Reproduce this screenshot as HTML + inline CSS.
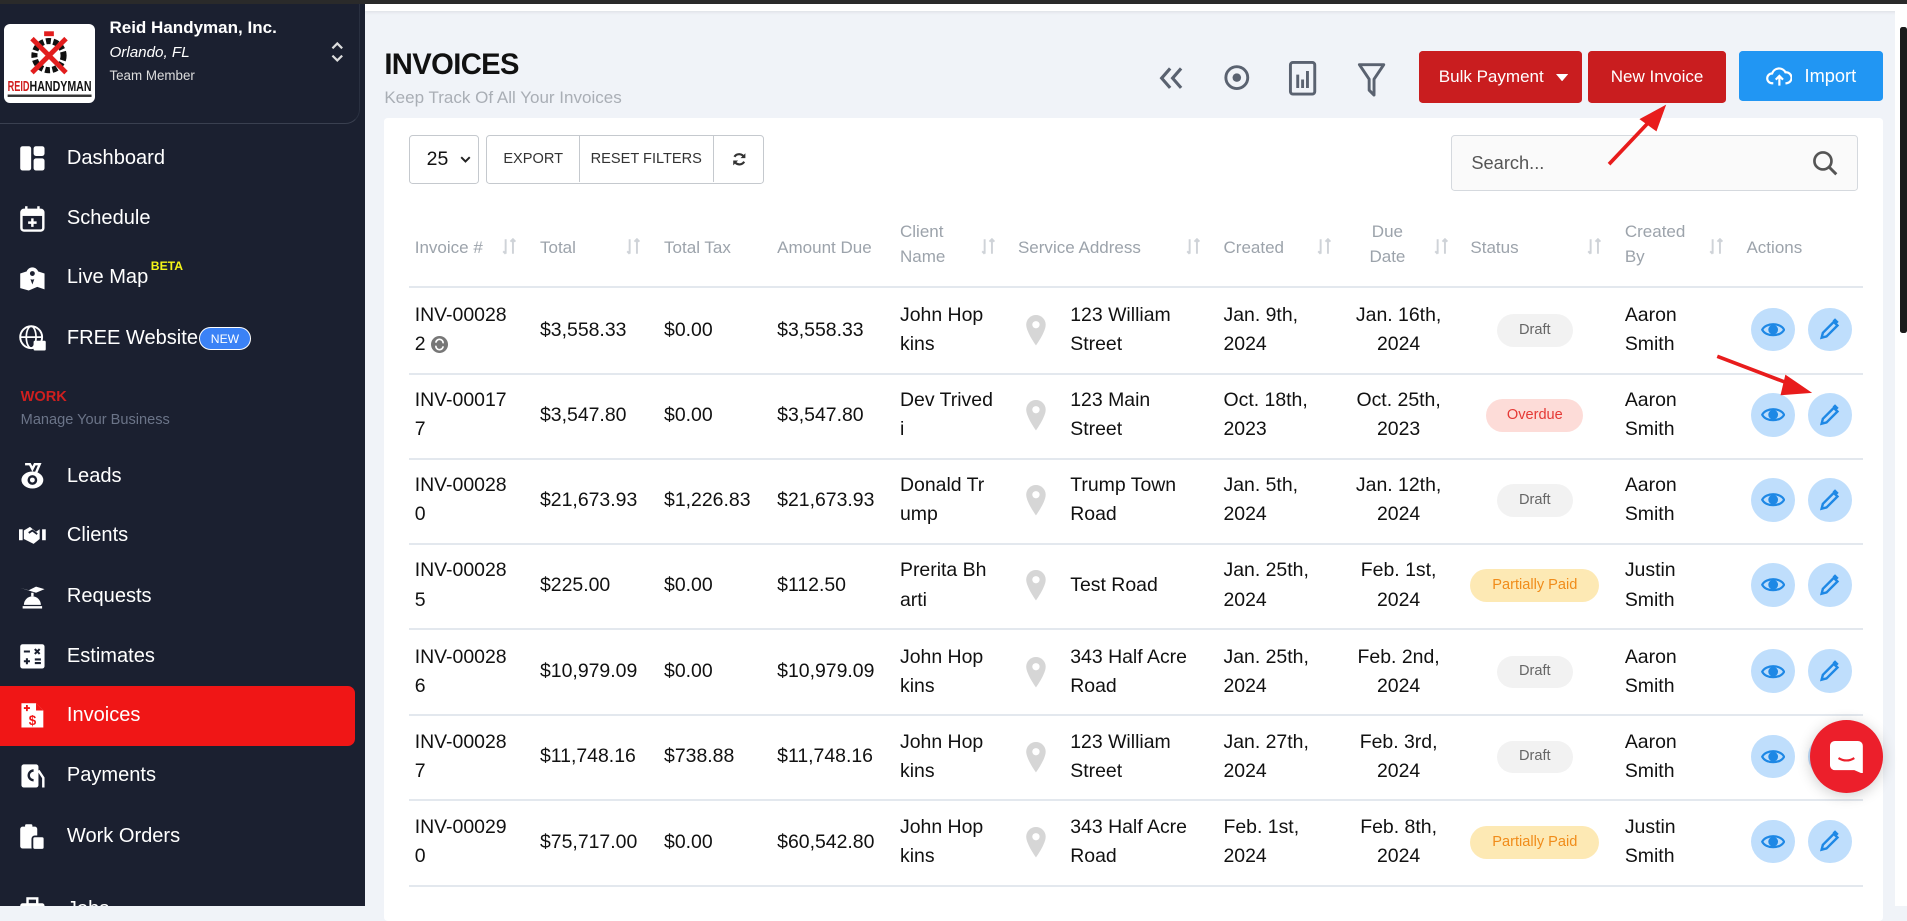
<!DOCTYPE html>
<html><head><meta charset="utf-8">
<style>
html{zoom:1.2162}
*{box-sizing:border-box;margin:0;padding:0}
body{width:1568px;height:745px;overflow:hidden;position:relative;font-family:"Liberation Sans",Arial,sans-serif;background:#f0f3f8;color:#111}
.abs{position:absolute}
#topbar{left:0;top:0;width:1568px;height:3px;background:#2a2a2a}
#side{left:0;top:3px;width:300px;height:742px;background:#1b2030;color:#fff;overflow:hidden}
.nav{position:absolute;left:0;width:292px;height:49px;display:flex;align-items:center;font-size:16.5px;color:#fff}
.nav svg{position:absolute;left:16px;width:22px;height:22px}
.nav span.t{position:absolute;left:55px}
.nav.act{background:#f01616;border-radius:0 6px 6px 0}
.hdr{position:absolute;top:180px;font-size:14px;color:#9ca3ab;line-height:21px}
.sort{position:absolute;top:196px;width:12px;height:14px}
.row{position:absolute;left:336px;width:1196px;height:71px;border-bottom:2px solid #e3e8ee}
.c{position:absolute;top:0;height:69px;display:flex;align-items:center;font-size:16px;line-height:24px;color:#111;white-space:nowrap}
.badge{font-size:12px;border-radius:14px;height:27px;display:flex;align-items:center;justify-content:center}
.circ{position:absolute;width:36px;height:36px;border-radius:50%;background:#bfdefc;display:flex;align-items:center;justify-content:center}
</style></head><body>
<div id="topbar" class="abs"></div>
<div id="side" class="abs">
  <div class="abs" style="left:0;top:0;width:296px;height:99px;border-bottom:1px solid #3a4050;border-right:1px solid #2a3040;border-radius:0 0 12px 0"></div>
  <div class="abs" style="left:3px;top:17px;width:75px;height:65px;background:#fff;border-radius:5px;overflow:hidden">
    <svg width="75" height="65" viewBox="0 0 75 65">
      <circle cx="37" cy="26" r="12" fill="none" stroke="#111" stroke-width="5" stroke-dasharray="4 2"/>
      <line x1="23" y1="12" x2="51" y2="40" stroke="#e21d1d" stroke-width="4"/>
      <line x1="51" y1="12" x2="23" y2="40" stroke="#e21d1d" stroke-width="4"/>
      <rect x="33" y="6" width="8" height="4" fill="#e21d1d"/>
      <text x="3" y="55" font-family="Liberation Sans" font-weight="bold" font-size="12" fill="#d01d1d" textLength="18" lengthAdjust="spacingAndGlyphs">REID</text>
      <text x="21" y="55" font-family="Liberation Sans" font-weight="bold" font-size="12" fill="#111" textLength="51" lengthAdjust="spacingAndGlyphs">HANDYMAN</text>
      <rect x="3" y="58" width="69" height="2" fill="#333"/>
    </svg>
  </div>
  <div class="abs" style="left:90px;top:12px;font-size:14px;font-weight:bold">Reid Handyman, Inc.</div>
  <div class="abs" style="left:90px;top:33px;font-size:12.5px;font-style:italic">Orlando, FL</div>
  <div class="abs" style="left:90px;top:53px;font-size:11px;color:#ddd">Team Member</div>
  <svg class="abs" style="left:271px;top:31px" width="12" height="18" viewBox="0 0 12 18"><path d="M2 6 L6 2 L10 6 M2 12 L6 16 L10 12" fill="none" stroke="#ddd" stroke-width="1.8"/></svg>

  <div class="nav" style="top:103px"><svg viewBox="0 0 22 22"><rect x="1" y="1" width="9" height="20" rx="2" fill="#fff"/><rect x="12" y="1" width="9" height="8" rx="2" fill="#fff"/><rect x="12" y="11" width="9" height="10" rx="2" fill="#fff"/></svg><span class="t">Dashboard</span></div>
  <div class="nav" style="top:152px"><svg viewBox="0 0 22 22"><rect x="2" y="4" width="18" height="17" rx="2" fill="none" stroke="#fff" stroke-width="2"/><rect x="2" y="4" width="18" height="5" fill="#fff"/><line x1="6" y1="1" x2="6" y2="5" stroke="#fff" stroke-width="2"/><line x1="16" y1="1" x2="16" y2="5" stroke="#fff" stroke-width="2"/><path d="M11 11v7M7.5 14.5h7" stroke="#fff" stroke-width="2"/></svg><span class="t">Schedule</span></div>
  <div class="nav" style="top:201px"><svg viewBox="0 0 22 22"><path d="M1 7 L7 5 L11 16 L15 5 L21 7 L21 20 L15 18 L8 21 L1 19Z" fill="#fff"/><circle cx="11" cy="7" r="5" fill="#fff"/><circle cx="11" cy="7" r="2" fill="#1b2030"/></svg><span class="t">Live Map</span><span style="position:absolute;left:124px;top:9px;font-size:10px;font-weight:bold;color:#f5f518">BETA</span></div>
  <div class="nav" style="top:251px"><svg viewBox="0 0 22 22"><circle cx="10" cy="10" r="9" fill="none" stroke="#fff" stroke-width="1.6"/><ellipse cx="10" cy="10" rx="4" ry="9" fill="none" stroke="#fff" stroke-width="1.4"/><line x1="1" y1="10" x2="19" y2="10" stroke="#fff" stroke-width="1.4"/><rect x="12" y="13" width="10" height="8" rx="1" fill="#fff"/></svg><span class="t">FREE Website</span><span style="position:absolute;left:164px;top:15px;height:19px;width:42px;border:1px solid #fff;background:#3b82f6;border-radius:10px;font-size:10px;display:flex;align-items:center;justify-content:center">NEW</span></div>

  <div class="abs" style="left:17px;top:317px;font-size:12px;font-weight:bold;color:#d01f1f">WORK</div>
  <div class="abs" style="left:17px;top:336px;font-size:12px;color:#6b7488">Manage Your Business</div>

  <div class="nav" style="top:364px"><svg viewBox="0 0 22 22"><path d="M5 1h4l2 4 2-4h4l-3 7" fill="none" stroke="#fff" stroke-width="2"/><ellipse cx="11" cy="14" rx="9" ry="7" fill="#fff"/><circle cx="11" cy="14" r="4" fill="#1b2030"/><circle cx="11" cy="14" r="2" fill="#fff"/></svg><span class="t">Leads</span></div>
  <div class="nav" style="top:413px"><svg viewBox="0 0 22 22"><rect x="0" y="6" width="3" height="9" fill="#fff"/><rect x="19" y="6" width="3" height="9" fill="#fff"/><path d="M4 7 L9 4 L14 8 L17 6 L17 14 L12 18 L4 14Z" fill="#fff"/><path d="M8 9l3-2 4 3" stroke="#1b2030" stroke-width="1.5" fill="none"/></svg><span class="t">Clients</span></div>
  <div class="nav" style="top:463px"><svg viewBox="0 0 22 22"><path d="M1 4 L8 6 L14 3 L21 5 L14 8Z" fill="#fff"/><rect x="10" y="8" width="2" height="3" fill="#fff"/><path d="M4 18 A7 7 0 0 1 18 18Z" fill="#fff"/><rect x="3" y="19" width="16" height="2" fill="#fff"/></svg><span class="t">Requests</span></div>
  <div class="nav" style="top:512px"><svg viewBox="0 0 22 22"><rect x="1" y="1" width="20" height="20" rx="2" fill="#fff"/><path d="M4 7h5M13 5l4 4M17 5l-4 4M4 15h5M6.5 12.5v5M13 13.5h5M13 16.5h5" stroke="#1b2030" stroke-width="1.7"/></svg><span class="t">Estimates</span></div>
  <div class="nav act" style="top:561px"><svg viewBox="0 0 22 22"><path d="M2 1h12l6 6v14H2Z" fill="#fff"/><path d="M14 1v6h6" fill="#f01616"/><path d="M4 5h5M6.5 2.5v5" stroke="#f01616" stroke-width="1.5"/><text x="8" y="19" font-size="11" font-weight="bold" fill="#f01616" font-family="Liberation Sans">$</text></svg><span class="t">Invoices</span></div>
  <div class="nav" style="top:610px"><svg viewBox="0 0 22 22"><rect x="2" y="2" width="14" height="19" rx="2" fill="#fff"/><path d="M16 7l4 6v8" stroke="#fff" stroke-width="2" fill="none"/><path d="M12 7a4 4 0 1 0 0 8" stroke="#1b2030" stroke-width="2" fill="none"/></svg><span class="t">Payments</span></div>
  <div class="nav" style="top:660px"><svg viewBox="0 0 22 22"><rect x="1" y="3" width="14" height="18" rx="2" fill="#fff"/><rect x="5" y="1" width="6" height="4" rx="1" fill="#fff"/><rect x="11" y="11" width="10" height="11" rx="2" fill="#fff" stroke="#1b2030" stroke-width="1.5"/></svg><span class="t">Work Orders</span></div>
  <div class="nav" style="top:720px"><svg viewBox="0 0 22 22"><rect x="1" y="6" width="20" height="15" rx="2" fill="#fff"/><rect x="7" y="2" width="8" height="5" fill="none" stroke="#fff" stroke-width="2"/></svg><span class="t">Jobs</span></div>
</div>

<div class="abs" style="left:300px;top:3px;width:1268px;height:6px;background:#fff;box-shadow:0 1px 3px rgba(0,0,0,.08)"></div>
<div class="abs" style="left:1558px;top:9px;width:10px;height:736px;background:#fff"></div>
<div class="abs" style="left:1562px;top:22px;width:6px;height:252px;background:#1b1b1b;border-radius:2px"></div>

<div class="abs" style="left:316px;top:40px;font-size:24px;font-weight:bold;letter-spacing:-0.5px">INVOICES</div>
<div class="abs" style="left:316px;top:72px;font-size:14px;color:#a9aeb5">Keep Track Of All Your Invoices</div>

<svg class="abs" style="left:952px;top:54px" width="22" height="20" viewBox="0 0 22 20"><path d="M10 2 L3 10 L10 18 M19 2 L12 10 L19 18" fill="none" stroke="#5a6270" stroke-width="2.6"/></svg>
<svg class="abs" style="left:1004px;top:52px" width="26" height="24" viewBox="0 0 26 24"><circle cx="13" cy="12" r="9" fill="none" stroke="#5a6270" stroke-width="2.4"/><circle cx="13" cy="12" r="3.5" fill="#5a6270"/></svg>
<svg class="abs" style="left:1059px;top:49px" width="24" height="30" viewBox="0 0 24 30"><rect x="2" y="2" width="20" height="26" rx="2" fill="none" stroke="#5a6270" stroke-width="2.4"/><path d="M8 12v11M12 16v7M16 9v14" stroke="#5a6270" stroke-width="2.4"/></svg>
<svg class="abs" style="left:1116px;top:50px" width="24" height="30" viewBox="0 0 24 30"><path d="M2 3 H22 L14 15 V28 L10 24 V15 Z" fill="none" stroke="#5a6270" stroke-width="2.4" stroke-linejoin="round"/></svg>

<div class="abs" style="left:1167px;top:42px;width:134px;height:43px;background:#c91d1f;border-radius:3px;color:#fff;font-size:14px;display:flex;align-items:center;padding-left:16px">Bulk Payment<svg style="margin-left:10px" width="10" height="6"><path d="M0 0h10L5 6Z" fill="#fff"/></svg></div>
<div class="abs" style="left:1306px;top:42px;width:113px;height:43px;background:#c91d1f;border-radius:3px;color:#fff;font-size:14px;display:flex;align-items:center;justify-content:center">New Invoice</div>
<div class="abs" style="left:1430px;top:42px;width:118px;height:41px;background:#2196f3;border-radius:3px;color:#fff;font-size:15px;display:flex;align-items:center;justify-content:center"><svg width="22" height="18" viewBox="0 0 22 18" style="margin-right:10px"><path d="M6 15H5a4 4 0 0 1 0-8 6 6 0 0 1 11-1 4.5 4.5 0 0 1 1 9h-1" fill="none" stroke="#fff" stroke-width="1.8"/><path d="M11 17V9M8 12l3-3 3 3" fill="none" stroke="#fff" stroke-width="1.8"/></svg>Import</div>

<div class="abs" style="left:316px;top:97px;width:1232px;height:660px;background:#fff;border-radius:3px"></div>

<div class="abs" style="left:336px;top:111px;width:58px;height:40px;border:1px solid #c5c9ce;border-radius:3px;font-size:16px;display:flex;align-items:center;padding-left:14px;background:#fff">25<svg style="margin-left:10px" width="9" height="6"><path d="M1 1l3.5 3.5L8 1" stroke="#222" stroke-width="1.6" fill="none"/></svg></div>
<div class="abs" style="left:400px;top:111px;width:228px;height:40px;border:1px solid #c5c9ce;border-radius:3px;background:#fff;font-size:12px;color:#333">
  <div class="abs" style="left:0;top:0;width:76px;height:38px;border-right:1px solid #c5c9ce;display:flex;align-items:center;justify-content:center">EXPORT</div>
  <div class="abs" style="left:76px;top:0;width:110px;height:38px;border-right:1px solid #c5c9ce;display:flex;align-items:center;justify-content:center">RESET FILTERS</div>
  <svg class="abs" style="left:201px;top:13px" width="12" height="12" viewBox="0 0 12 12"><path d="M10 4.5A4.5 4.5 0 0 0 2 4M2 7.5A4.5 4.5 0 0 0 10 8" fill="none" stroke="#333" stroke-width="1.8"/><path d="M11 1v4H7M1 11V7h4" fill="#333"/></svg>
</div>
<div class="abs" style="left:1193px;top:111px;width:335px;height:46px;border:1px solid #d5d9de;border-radius:3px;background:#fafafa;font-size:15px;color:#555;display:flex;align-items:center;padding-left:16px">Search...</div>
<svg class="abs" style="left:1490px;top:123px" width="22" height="22" viewBox="0 0 22 22"><circle cx="9" cy="9" r="7" fill="none" stroke="#555" stroke-width="2.2"/><line x1="14" y1="14" x2="20" y2="20" stroke="#555" stroke-width="2.4"/></svg>

<div class="hdr" style="left:341px;top:193px">Invoice #</div>
<div class="hdr" style="left:444px;top:193px">Total</div>
<div class="hdr" style="left:546px;top:193px">Total Tax</div>
<div class="hdr" style="left:639px;top:193px">Amount Due</div>
<div class="hdr" style="left:740px">Client<br>Name</div>
<div class="hdr" style="left:837px;top:193px">Service Address</div>
<div class="hdr" style="left:1006px;top:193px">Created</div>
<div class="hdr" style="left:1126px;text-align:center">Due<br>Date</div>
<div class="hdr" style="left:1209px;top:193px">Status</div>
<div class="hdr" style="left:1336px">Created<br>By</div>
<div class="hdr" style="left:1436px;top:193px">Actions</div>
<svg width="0" height="0" style="position:absolute"><defs><g id="srt"><path d="M3 1v12M1 11l2 2M9 13V1M7 3l2-2 2 2" stroke="#cfd3d8" stroke-width="1.6" fill="none"/></g></defs></svg>
<svg class="sort" style="left:413px" viewBox="0 0 12 14"><use href="#srt"/></svg>
<svg class="sort" style="left:515px" viewBox="0 0 12 14"><use href="#srt"/></svg>
<svg class="sort" style="left:807px" viewBox="0 0 12 14"><use href="#srt"/></svg>
<svg class="sort" style="left:975px" viewBox="0 0 12 14"><use href="#srt"/></svg>
<svg class="sort" style="left:1083px" viewBox="0 0 12 14"><use href="#srt"/></svg>
<svg class="sort" style="left:1179px" viewBox="0 0 12 14"><use href="#srt"/></svg>
<svg class="sort" style="left:1305px" viewBox="0 0 12 14"><use href="#srt"/></svg>
<svg class="sort" style="left:1405px" viewBox="0 0 12 14"><use href="#srt"/></svg>
<div class="abs" style="left:336px;top:235px;width:1196px;height:2px;background:#e3e8ee"></div>

<svg width="0" height="0" style="position:absolute"><defs>
<g id="pin"><path d="M9 0a8 8 0 0 1 8 8c0 6-8 17-8 17S1 14 1 8a8 8 0 0 1 8-8z" fill="#d6d6d6"/><circle cx="9" cy="8" r="3" fill="#fff"/></g>
<g id="eye"><path d="M1 8C4 2 16 2 19 8 16 14 4 14 1 8Z" fill="none" stroke="#1e88e5" stroke-width="1.8"/><circle cx="10" cy="8" r="4" fill="#1e88e5"/></g>
<g id="pen"><path d="M3 17l1-4 9-9 3 3-9 9z" fill="none" stroke="#1e88e5" stroke-width="2"/><path d="M12 3l2-2 3 3-2 2z" fill="#1e88e5"/></g>
</defs></svg>

<div class="row" style="top:237px">
 <div class="c" style="left:5px"><span>INV-00028<br>2 <svg width="14" height="14" viewBox="0 0 14 14" style="vertical-align:-2px"><circle cx="7" cy="7" r="7" fill="#777"/><path d="M10 6a3 3 0 0 0-6-.5M4 8a3 3 0 0 0 6 .5" stroke="#fff" stroke-width="1.4" fill="none"/></svg></span></div>
 <div class="c" style="left:108px">$3,558.33</div><div class="c" style="left:210px">$0.00</div><div class="c" style="left:303px">$3,558.33</div>
 <div class="c" style="left:404px">John Hop<br>kins</div>
 <svg class="abs" style="left:507px;top:22px" width="18" height="26"><use href="#pin"/></svg>
 <div class="c" style="left:544px">123 William<br>Street</div>
 <div class="c" style="left:670px">Jan. 9th,<br>2024</div>
 <div class="c" style="left:760px;width:108px;justify-content:center;text-align:center">Jan. 16th,<br>2024</div>
 <div class="c" style="left:895px"><div class="badge" style="width:62px;background:#f2f2f2;color:#666">Draft</div></div>
 <div class="c" style="left:1000px">Aaron<br>Smith</div>
 <div class="circ" style="left:1104px;top:16px"><svg width="20" height="16"><use href="#eye"/></svg></div>
 <div class="circ" style="left:1151px;top:16px"><svg width="20" height="20"><use href="#pen"/></svg></div>
</div>
<div class="row" style="top:307px">
 <div class="c" style="left:5px">INV-00017<br>7</div>
 <div class="c" style="left:108px">$3,547.80</div><div class="c" style="left:210px">$0.00</div><div class="c" style="left:303px">$3,547.80</div>
 <div class="c" style="left:404px">Dev Trived<br>i</div>
 <svg class="abs" style="left:507px;top:22px" width="18" height="26"><use href="#pin"/></svg>
 <div class="c" style="left:544px">123 Main<br>Street</div>
 <div class="c" style="left:670px">Oct. 18th,<br>2023</div>
 <div class="c" style="left:760px;width:108px;justify-content:center;text-align:center">Oct. 25th,<br>2023</div>
 <div class="c" style="left:886px"><div class="badge" style="width:80px;background:#fddcd8;color:#e53935">Overdue</div></div>
 <div class="c" style="left:1000px">Aaron<br>Smith</div>
 <div class="circ" style="left:1104px;top:16px"><svg width="20" height="16"><use href="#eye"/></svg></div>
 <div class="circ" style="left:1151px;top:16px"><svg width="20" height="20"><use href="#pen"/></svg></div>
</div>
<div class="row" style="top:377px">
 <div class="c" style="left:5px">INV-00028<br>0</div>
 <div class="c" style="left:108px">$21,673.93</div><div class="c" style="left:210px">$1,226.83</div><div class="c" style="left:303px">$21,673.93</div>
 <div class="c" style="left:404px">Donald Tr<br>ump</div>
 <svg class="abs" style="left:507px;top:22px" width="18" height="26"><use href="#pin"/></svg>
 <div class="c" style="left:544px">Trump Town<br>Road</div>
 <div class="c" style="left:670px">Jan. 5th,<br>2024</div>
 <div class="c" style="left:760px;width:108px;justify-content:center;text-align:center">Jan. 12th,<br>2024</div>
 <div class="c" style="left:895px"><div class="badge" style="width:62px;background:#f2f2f2;color:#666">Draft</div></div>
 <div class="c" style="left:1000px">Aaron<br>Smith</div>
 <div class="circ" style="left:1104px;top:16px"><svg width="20" height="16"><use href="#eye"/></svg></div>
 <div class="circ" style="left:1151px;top:16px"><svg width="20" height="20"><use href="#pen"/></svg></div>
</div>
<div class="row" style="top:447px">
 <div class="c" style="left:5px">INV-00028<br>5</div>
 <div class="c" style="left:108px">$225.00</div><div class="c" style="left:210px">$0.00</div><div class="c" style="left:303px">$112.50</div>
 <div class="c" style="left:404px">Prerita Bh<br>arti</div>
 <svg class="abs" style="left:507px;top:22px" width="18" height="26"><use href="#pin"/></svg>
 <div class="c" style="left:544px">Test Road</div>
 <div class="c" style="left:670px">Jan. 25th,<br>2024</div>
 <div class="c" style="left:760px;width:108px;justify-content:center;text-align:center">Feb. 1st,<br>2024</div>
 <div class="c" style="left:873px"><div class="badge" style="width:106px;background:#fde9b4;color:#f08c1a">Partially Paid</div></div>
 <div class="c" style="left:1000px">Justin<br>Smith</div>
 <div class="circ" style="left:1104px;top:16px"><svg width="20" height="16"><use href="#eye"/></svg></div>
 <div class="circ" style="left:1151px;top:16px"><svg width="20" height="20"><use href="#pen"/></svg></div>
</div>
<div class="row" style="top:518px">
 <div class="c" style="left:5px">INV-00028<br>6</div>
 <div class="c" style="left:108px">$10,979.09</div><div class="c" style="left:210px">$0.00</div><div class="c" style="left:303px">$10,979.09</div>
 <div class="c" style="left:404px">John Hop<br>kins</div>
 <svg class="abs" style="left:507px;top:22px" width="18" height="26"><use href="#pin"/></svg>
 <div class="c" style="left:544px">343 Half Acre<br>Road</div>
 <div class="c" style="left:670px">Jan. 25th,<br>2024</div>
 <div class="c" style="left:760px;width:108px;justify-content:center;text-align:center">Feb. 2nd,<br>2024</div>
 <div class="c" style="left:895px"><div class="badge" style="width:62px;background:#f2f2f2;color:#666">Draft</div></div>
 <div class="c" style="left:1000px">Aaron<br>Smith</div>
 <div class="circ" style="left:1104px;top:16px"><svg width="20" height="16"><use href="#eye"/></svg></div>
 <div class="circ" style="left:1151px;top:16px"><svg width="20" height="20"><use href="#pen"/></svg></div>
</div>
<div class="row" style="top:588px">
 <div class="c" style="left:5px">INV-00028<br>7</div>
 <div class="c" style="left:108px">$11,748.16</div><div class="c" style="left:210px">$738.88</div><div class="c" style="left:303px">$11,748.16</div>
 <div class="c" style="left:404px">John Hop<br>kins</div>
 <svg class="abs" style="left:507px;top:22px" width="18" height="26"><use href="#pin"/></svg>
 <div class="c" style="left:544px">123 William<br>Street</div>
 <div class="c" style="left:670px">Jan. 27th,<br>2024</div>
 <div class="c" style="left:760px;width:108px;justify-content:center;text-align:center">Feb. 3rd,<br>2024</div>
 <div class="c" style="left:895px"><div class="badge" style="width:62px;background:#f2f2f2;color:#666">Draft</div></div>
 <div class="c" style="left:1000px">Aaron<br>Smith</div>
 <div class="circ" style="left:1104px;top:16px"><svg width="20" height="16"><use href="#eye"/></svg></div>
 <div class="circ" style="left:1151px;top:16px"><svg width="20" height="20"><use href="#pen"/></svg></div>
</div>
<div class="row" style="top:658px">
 <div class="c" style="left:5px">INV-00029<br>0</div>
 <div class="c" style="left:108px">$75,717.00</div><div class="c" style="left:210px">$0.00</div><div class="c" style="left:303px">$60,542.80</div>
 <div class="c" style="left:404px">John Hop<br>kins</div>
 <svg class="abs" style="left:507px;top:22px" width="18" height="26"><use href="#pin"/></svg>
 <div class="c" style="left:544px">343 Half Acre<br>Road</div>
 <div class="c" style="left:670px">Feb. 1st,<br>2024</div>
 <div class="c" style="left:760px;width:108px;justify-content:center;text-align:center">Feb. 8th,<br>2024</div>
 <div class="c" style="left:873px"><div class="badge" style="width:106px;background:#fde9b4;color:#f08c1a">Partially Paid</div></div>
 <div class="c" style="left:1000px">Justin<br>Smith</div>
 <div class="circ" style="left:1104px;top:16px"><svg width="20" height="16"><use href="#eye"/></svg></div>
 <div class="circ" style="left:1151px;top:16px"><svg width="20" height="20"><use href="#pen"/></svg></div>
</div>

<div class="abs" style="left:1488px;top:592px;width:60px;height:60px;border-radius:50%;background:#ec1f2b;box-shadow:0 2px 12px rgba(0,0,0,.2)">
  <svg class="abs" style="left:17px;top:17px" width="27" height="27" viewBox="0 0 27 27"><path d="M4 0h19a4 4 0 0 1 4 4v23l-7-3H4a4 4 0 0 1-4-4V4a4 4 0 0 1 4-4z" fill="#fff"/><path d="M7 14q6.5 4 13 0" stroke="#ec1f2b" stroke-width="1.8" fill="none"/></svg>
</div>

<svg class="abs" style="left:0;top:0" width="1568" height="745" viewBox="0 0 1568 745">
  <line x1="1323" y1="135" x2="1358" y2="98" stroke="#e81c1c" stroke-width="3"/>
  <path d="M1370 86 L1348 98 L1362 108Z" fill="#e81c1c"/>
  <line x1="1412" y1="293" x2="1475" y2="317" stroke="#e81c1c" stroke-width="3"/>
  <path d="M1490 323 L1468 308 L1464 325Z" fill="#e81c1c"/>
</svg>
</body></html>
